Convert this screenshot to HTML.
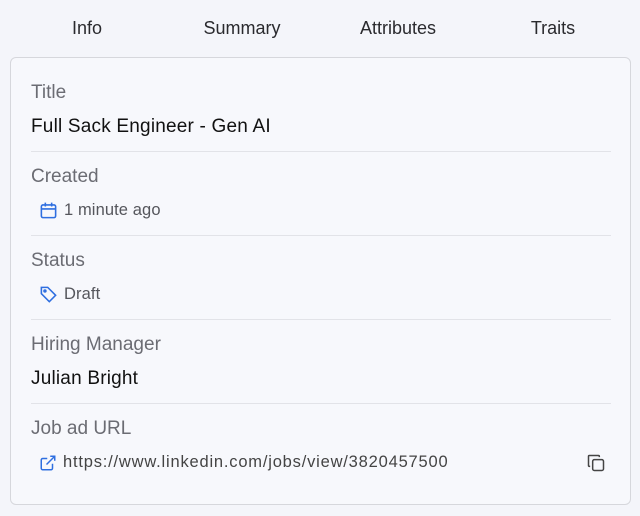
<!DOCTYPE html>
<html><head><style>
*{margin:0;padding:0;box-sizing:border-box}
body{width:640px;height:516px;background:#f4f5fa;font-family:"Liberation Sans",sans-serif;position:relative;overflow:hidden}
.tab{position:absolute;top:18px;font-size:18px;color:#2a2a2e;transform:translateX(-50%)}
.card{position:absolute;left:10px;top:57px;width:621px;height:448px;border:1px solid #d6d7dc;border-radius:6px;background:#f7f8fc}
.sec{position:absolute;left:20px;width:580px;height:84px}
.sep{position:absolute;left:20px;width:580px;border-top:1px solid #e2e3e8}
.lab{position:absolute;left:0;top:24px;font-size:19px;color:#6b6c73}
.val{position:absolute;left:0;top:58px;font-size:19px;color:#111;letter-spacing:0.2px}
.sm{position:absolute;left:8px;top:59px;font-size:16.5px;color:#55565c;display:flex;align-items:center;gap:6px;letter-spacing:0.1px}
svg{display:block}
</style></head><body>
<div class="tab" style="left:87px">Info</div>
<div class="tab" style="left:242px">Summary</div>
<div class="tab" style="left:398px">Attributes</div>
<div class="tab" style="left:553px">Traits</div>
<div class="card">
 <div class="sec" style="top:0"><div class="lab">Title</div><div class="val">Full Sack Engineer - Gen AI</div></div>
 <div class="sep" style="top:93px"></div>
 <div class="sec" style="top:84px"><div class="lab">Created</div><div class="sm"><svg width="19" height="19" viewBox="0 0 24 24" fill="none" stroke="#2f6fe0" stroke-width="2"><rect x="3" y="5" width="18" height="16" rx="2"/><path d="M3 10h18M8 2v5M16 2v5"/></svg>1 minute ago</div></div>
 <div class="sep" style="top:177px"></div>
 <div class="sec" style="top:168px"><div class="lab">Status</div><div class="sm"><svg width="19" height="19" viewBox="0 0 24 24" fill="none" stroke="#2f6fe0" stroke-width="2"><path d="M3 3h8l10 10-8 8L3 11z"/><circle cx="7.5" cy="7.5" r="1.2"/></svg>Draft</div></div>
 <div class="sep" style="top:261px"></div>
 <div class="sec" style="top:252px"><div class="lab">Hiring Manager</div><div class="val">Julian Bright</div></div>
 <div class="sep" style="top:345px"></div>
 <div class="sec" style="top:336px"><div class="lab">Job ad URL</div><div class="sm" style="color:#444;letter-spacing:0.8px"><svg width="18" height="18" viewBox="0 0 24 24" fill="none" stroke="#2f6fe0" stroke-width="2"><path d="M18 13v6a2 2 0 0 1-2 2H5a2 2 0 0 1-2-2V8a2 2 0 0 1 2-2h6M15 3h6v6M10 14L21 3"/></svg>https://www.linkedin.com/jobs/view/3820457500</div>
 <svg style="position:absolute;left:555px;top:59px" width="20" height="20" viewBox="0 0 24 24" fill="none" stroke="#444" stroke-width="1.8"><rect x="8" y="8" width="13" height="13" rx="2"/><path d="M5 16H4a1 1 0 0 1-1-1V4a1 1 0 0 1 1-1h11a1 1 0 0 1 1 1v1"/></svg></div>
</div>
</body></html>
